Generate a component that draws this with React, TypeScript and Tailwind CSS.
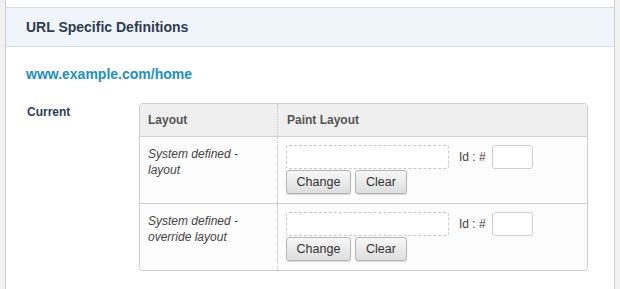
import React from "react";

function Btn({ label, w }: { label: string; w: string }) {
  return (
    <button
      className={`h-[24px] ${w} rounded-[3px] border border-[#b5b5b5] bg-gradient-to-b from-[#f7f7f7] to-[#dedede] text-[12.5px] text-[#333] shadow-[0_1px_1px_rgba(0,0,0,0.15)]`}
    >
      {label}
    </button>
  );
}

function Row({ l1, l2, last }: { l1: string; l2: string; last?: boolean }) {
  return (
    <div className={`flex bg-[#fcfcfc] ${last ? "rounded-b-[4px]" : "border-b border-[#d0d0d0]"}`}>
      <div className="w-[138px] shrink-0 border-r border-dotted border-[#c8c8c8] pl-[8px] pt-[9px] text-[12px] italic leading-[16px] text-[#444]">
        <div>{l1}</div>
        <div>{l2}</div>
      </div>
      <div className="pl-[8px] pt-[8px] pb-[9px]">
        <div className="flex items-center">
          <div className="h-[24px] w-[163px] rounded-[3px] border border-dashed border-[#c8c8c8] bg-white" />
          <span className="ml-[10px] text-[12px] text-[#444]">Id : #</span>
          <div className="ml-[6px] h-[24px] w-[41px] rounded-[3px] border border-[#cfcfcf] bg-white" />
        </div>
        <div className="mt-[1px] flex gap-[4px]">
          <Btn label="Change" w="w-[65px]" />
          <Btn label="Clear" w="w-[52px]" />
        </div>
      </div>
    </div>
  );
}

export default function App() {
  return (
    <div className="h-[289px] w-[620px] bg-[#f2f2f2] pl-[5px] pr-[5px] font-['Liberation_Sans',Arial,sans-serif]">
      <div className="h-full border-x border-[#cfcfcf] bg-white pt-[7px]">
        <div className="flex h-[40px] items-center border-y border-[#d8dee8] bg-[#f0f5fc] pl-[20px] text-[14px] font-bold text-[#2e3c50]">
          URL Specific Definitions
        </div>
        <div className="pl-[20px] pt-[19px] text-[14px] font-bold leading-[17px] text-[#1b8fc0]">
          www.example.com/home
        </div>
        <div className="flex pt-[20px]">
          <div className="w-[133px] shrink-0 pl-[21px] pt-[2px] text-[12px] font-bold leading-[14px] text-[#2c3e5c]">
            Current
          </div>
          <div className="w-[449px] overflow-hidden rounded-[4px] border border-[#cccccc]">
            <div className="flex h-[33px] border-b border-[#d0d0d0] bg-[#efefef] text-[12px] font-bold text-[#555]">
              <div className="flex w-[138px] shrink-0 items-center border-r border-dotted border-[#c8c8c8] pl-[8px]">
                Layout
              </div>
              <div className="flex items-center pl-[9px]">Paint Layout</div>
            </div>
            <Row l1="System defined -" l2="layout" />
            <Row l1="System defined -" l2="override layout" last />
          </div>
        </div>
      </div>
    </div>
  );
}
